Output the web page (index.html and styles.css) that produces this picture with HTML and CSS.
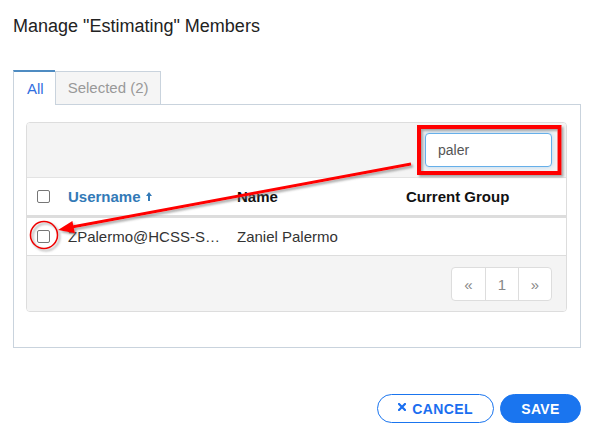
FILE: index.html
```html
<!DOCTYPE html>
<html>
<head>
<meta charset="utf-8">
<link rel="stylesheet" href="styles.css">
</head>
<body>
<div class="dialog">
  <h1 class="title">Manage "Estimating" Members</h1>
  <div class="tabs">
    <div class="tab tab-active">All</div>
    <div class="tab">Selected (2)</div>
  </div>
  <div class="panel">
    <div class="grid">
      <div class="toolbar">
        <div class="search">paler</div>
      </div>
      <div class="row head">
        <div class="cell cb-cell"><span class="cb"></span></div>
        <div class="cell sort">Username
          <svg class="sort-icon" width="6" height="9" viewBox="0 0 6 9"><path d="M3 0 L6 4 L4 4 L4 9 L2 9 L2 4 L0 4 Z" fill="#337ab7"/></svg>
        </div>
        <div class="cell">Name</div>
        <div class="cell">Current Group</div>
      </div>
      <div class="row data">
        <div class="cell cb-cell"><span class="cb"></span></div>
        <div class="cell">ZPalermo@HCSS-S…</div>
        <div class="cell">Zaniel Palermo</div>
        <div class="cell"></div>
      </div>
      <div class="pager-bar">
        <div class="pager">
          <span class="pg">«</span>
          <span class="pg">1</span>
          <span class="pg">»</span>
        </div>
      </div>
    </div>
  </div>
  <div class="actions">
    <button class="btn btn-outline"><svg class="x" width="8" height="8" viewBox="0 0 8 8"><path d="M1 1 L7 7 M7 1 L1 7" stroke="#1a6ef0" stroke-width="2.2" stroke-linecap="square"/></svg>CANCEL</button>
    <button class="btn btn-fill">SAVE</button>
  </div>
</div>
<svg class="annot" width="594" height="430" viewBox="0 0 594 430">
  <defs>
    <filter id="sh" x="-10%" y="-10%" width="120%" height="130%">
      <feDropShadow dx="2" dy="2" stdDeviation="1.2" flood-color="#666" flood-opacity="0.55"/>
    </filter>
  </defs>
  <g filter="url(#sh)">
    <rect x="419" y="127" width="140.5" height="46" fill="none" stroke="#f00" stroke-width="4"/>
    <line x1="411" y1="164" x2="72" y2="227" stroke="#f00" stroke-width="3"/>
    <polygon points="58,230 75,233.2 72.4,221" fill="#f00"/>
    <circle cx="44" cy="235" r="13.5" fill="none" stroke="#e00" stroke-width="1.6"/>
  </g>
</svg>
</body>
</html>
```
FILE: styles.css
```css
* { box-sizing: border-box; }
html, body { margin: 0; padding: 0; background: #fff; }
body {
  font-family: "Liberation Sans", Arial, sans-serif;
  color: #333;
  width: 594px;
  height: 430px;
  position: relative;
  overflow: hidden;
}
.dialog { padding: 16px 13px 0 13px; }
.title {
  margin: 0 0 34px 0;
  font-size: 18px;
  font-weight: normal;
  line-height: 20px;
  color: #222;
}
.tabs {
  display: flex;
  align-items: flex-end;
  position: relative;
  z-index: 1;
}
.tab {
  font-size: 15px;
  line-height: 17px;
  height: 33px;
  padding: 7px 11px 0 12px;
  border: 1px solid #c9d3dd;
  border-bottom: none;
  background: #f5f5f5;
  color: #999;
}
.tab-active {
  height: 35px;
  margin-bottom: -1px;
  padding: 8px 11px 0 13px;
  border-top: 2px solid #4f8cc2;
  background: #fff;
  color: #2f6fe0;
  border-right: none;
}
.panel {
  border: 1px solid #c9d3dd;
  padding: 17px 13px 36px 12px;
  height: 244px;
}
.grid {
  border: 1px solid #ddd;
  border-radius: 4px;
  overflow: hidden;
  font-size: 15px;
}
.toolbar {
  background: #f4f4f4;
  height: 55px;
  display: flex;
  justify-content: flex-end;
  padding: 10px 14px 0 0;
  border-bottom: 1px solid #e3e3e3;
}
.search {
  width: 127px;
  height: 34px;
  border: 1px solid #66afe9;
  border-radius: 4px;
  box-shadow: 0 0 5px rgba(102, 175, 233, 0.45);
  background: #fff;
  font-size: 14px;
  color: #555;
  padding: 8px 12px;
  line-height: 16px;
}
.row {
  display: grid;
  grid-template-columns: 31px 169px 169px 1fr;
  align-items: center;
  background: #fff;
}
.head {
  height: 40px;
  border-bottom: 3px solid #ddd;
  font-weight: bold;
  color: #111;
}
.data {
  height: 38px;
  border-bottom: 1px solid #ddd;
}
.cell {
  padding-left: 10px;
  white-space: nowrap;
  overflow: hidden;
  display: flex;
  align-items: center;
}
.cb-cell { padding-left: 10px; }
.cb {
  display: inline-block;
  width: 13px;
  height: 13px;
  border: 1px solid #767676;
  border-radius: 2px;
  background: #fff;
}
.sort { color: #337ab7; }
.sort-icon { margin-left: 5px; }
.pager-bar {
  background: #f4f4f4;
  height: 55px;
  display: flex;
  justify-content: flex-end;
  padding: 11px 14px 0 0;
}
.pager {
  display: flex;
  height: 34px;
  border: 1px solid #ddd;
  border-radius: 4px;
  background: #fff;
  overflow: hidden;
}
.pg {
  width: 33px;
  display: flex;
  align-items: center;
  justify-content: center;
  color: #888;
  font-size: 15px;
  border-left: 1px solid #ddd;
}
.pg:first-child { border-left: none; }
.actions {
  display: flex;
  justify-content: flex-end;
  gap: 6px;
  margin-top: 46px;
}
.btn {
  font-family: "Liberation Sans", Arial, sans-serif;
  font-weight: bold;
  font-size: 14px;
  letter-spacing: 0.4px;
  height: 29px;
  border-radius: 15px;
  border: 1px solid #1a75ef;
  padding: 0;
  display: flex;
  align-items: center;
  justify-content: center;
}
.btn-outline { width: 117px; background: #fff; color: #1a6ef0; }
.btn-fill { width: 81px; background: #1a75ef; color: #fff; }
.x { margin-right: 6px; margin-top: -3px; }
.annot { position: absolute; left: 0; top: 0; pointer-events: none; }
```
